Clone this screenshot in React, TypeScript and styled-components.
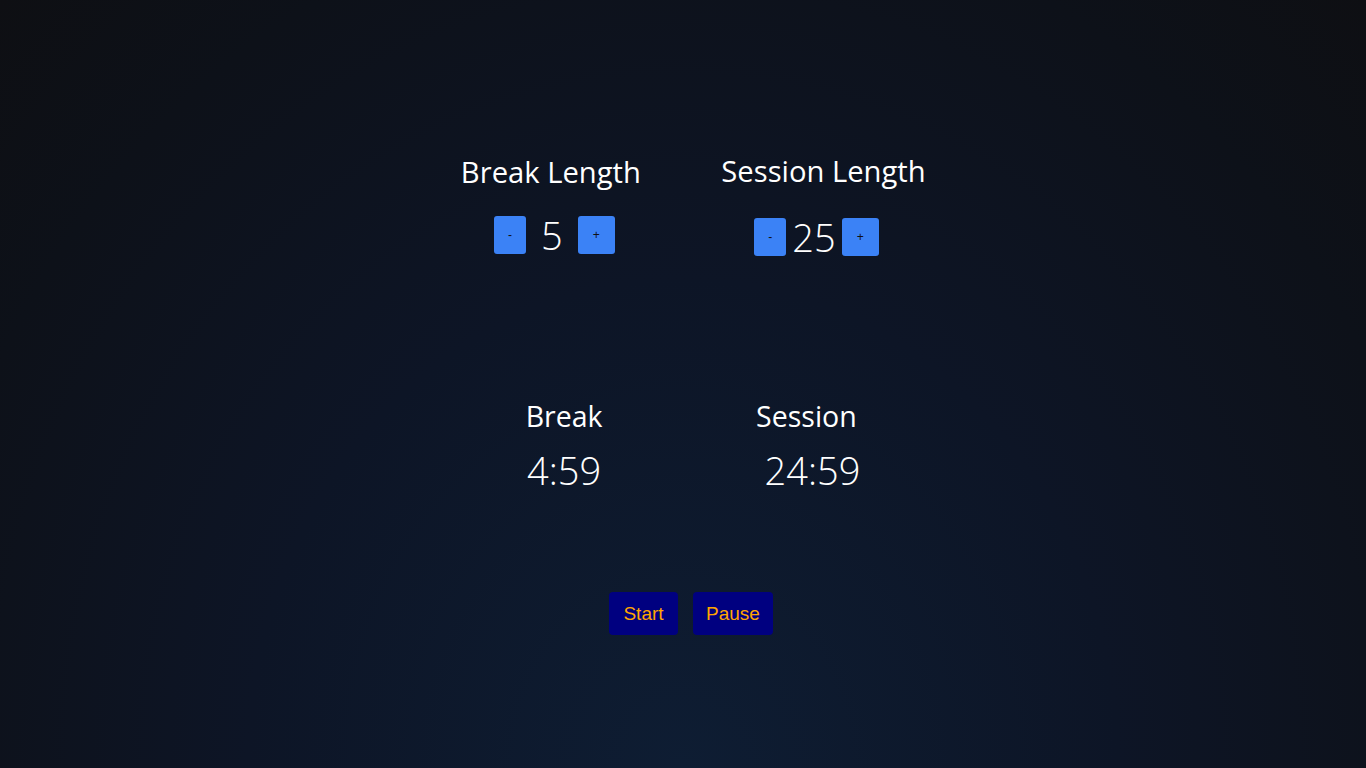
import React from "react";
import styled, { createGlobalStyle } from "styled-components";

const GlobalStyle = createGlobalStyle`
  html, body {
    margin: 0;
    padding: 0;
  }
  body {
    font-family: "Open Sans", "Noto Sans", sans-serif;
  }
`;

const Page = styled.div`
  min-height: 768px;
  box-sizing: border-box;
  background: radial-gradient(
    ellipse at bottom,
    #0e1d33 0%,
    #0d1526 45%,
    #0d1119 80%,
    #0e0f13 100%
  );
  color: #ffffff;
  display: flex;
  flex-direction: column;
  align-items: center;
  padding-top: 150px;
`;

const SettingsRow = styled.div`
  display: flex;
  justify-content: center;
  align-items: flex-start;
  gap: 80.5px;
  padding-left: 20.5px;
`;

const Setting = styled.div<{ $shift?: number }>`
  display: flex;
  flex-direction: column;
  align-items: center;
  margin-top: ${(p) => p.$shift ?? 0}px;
`;

const Title = styled.h2`
  margin: 0;
  font-size: 29.2px;
  font-weight: 400;
  line-height: 44px;
`;

const Controls = styled.div<{ $gap: number; $drop?: number; $nudge?: number }>`
  display: flex;
  align-items: center;
  gap: ${(p) => p.$gap}px;
  margin-top: ${(p) => 22 + (p.$drop ?? 0)}px;
  margin-left: ${(p) => Math.max(p.$nudge ?? 0, 0) * 2}px;
  margin-right: ${(p) => Math.max(-(p.$nudge ?? 0), 0) * 2}px;
`;

const StepButton = styled.button<{ $wide?: boolean }>`
  width: ${(p) => (p.$wide ? 37 : 32)}px;
  height: 38px;
  border: none;
  border-radius: 3px;
  background: #3b82f6;
  color: #111111;
  font-family: "Liberation Sans", Arial, sans-serif;
  font-size: 12px;
  padding: 0;
  cursor: pointer;
`;

const Value = styled.span<{ $pad?: number }>`
  font-size: 38px;
  font-weight: 300;
  line-height: 38px;
  padding: 0 ${(p) => p.$pad ?? 0}px;
`;

const TimersRow = styled.div`
  display: flex;
  justify-content: center;
  gap: 150px;
  margin-top: 140px;
  padding-left: 20px;
`;

const Timer = styled.div`
  display: flex;
  flex-direction: column;
  align-items: center;
`;

const TimerLabel = styled.h3`
  margin: 0;
  font-size: 28.5px;
  font-weight: 400;
  line-height: 40px;
`;

const TimerValue = styled.div<{ $indent?: number }>`
  font-size: 38px;
  font-weight: 300;
  line-height: 50px;
  margin-top: 9px;
  padding-left: ${(p) => p.$indent ?? 0}px;
`;

const ActionRow = styled.div`
  display: flex;
  gap: 15px;
  margin-top: 97px;
  padding-left: 16px;
`;

const ActionButton = styled.button<{ $w: number }>`
  width: ${(p) => p.$w}px;
  height: 43px;
  border: none;
  border-radius: 4px;
  background: #000080;
  color: #ffa500;
  font-family: "Liberation Sans", Arial, sans-serif;
  font-size: 19px;
  padding: 0;
  cursor: pointer;
`;

export default function App() {
  return (
    <>
      <GlobalStyle />
      <Page>
        <SettingsRow>
          <Setting>
            <Title>Break Length</Title>
            <Controls $gap={7} $nudge={3.5}>
              <StepButton>-</StepButton>
              <Value $pad={8}>5</Value>
              <StepButton $wide>+</StepButton>
            </Controls>
          </Setting>
          <Setting $shift={-1}>
            <Title>Session Length</Title>
            <Controls $gap={6} $drop={3} $nudge={-7}>
              <StepButton>-</StepButton>
              <Value>25</Value>
              <StepButton $wide>+</StepButton>
            </Controls>
          </Setting>
        </SettingsRow>

        <TimersRow>
          <Timer>
            <TimerLabel>Break</TimerLabel>
            <TimerValue>4:59</TimerValue>
          </Timer>
          <Timer>
            <TimerLabel>Session</TimerLabel>
            <TimerValue $indent={12}>24:59</TimerValue>
          </Timer>
        </TimersRow>

        <ActionRow>
          <ActionButton $w={69}>Start</ActionButton>
          <ActionButton $w={80}>Pause</ActionButton>
        </ActionRow>
      </Page>
    </>
  );
}
